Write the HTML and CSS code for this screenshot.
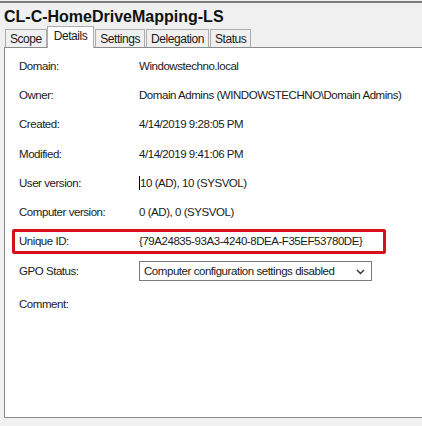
FILE: index.html
```html
<!DOCTYPE html>
<html lang="en">
<head>
    <meta charset="UTF-8">
    <title>CL-C-HomeDriveMapping-LS - Details</title>
    <link rel="stylesheet" href="styles.css">
</head>
<body>
    <div class="window">
        <h1 class="gpo-title">CL-C-HomeDriveMapping-LS</h1>

        <div class="tabs">
            <span class="tab">Scope</span>
            <span class="tab active">Details</span>
            <span class="tab">Settings</span>
            <span class="tab">Delegation</span>
            <span class="tab">Status</span>
        </div>

        <div class="panel">
            <div class="row">
                <span class="label">Domain:</span>
                <span class="value">Windowstechno.local</span>
            </div>
            <div class="row">
                <span class="label">Owner:</span>
                <span class="value">Domain Admins (WINDOWSTECHNO\Domain Admins)</span>
            </div>
            <div class="row">
                <span class="label">Created:</span>
                <span class="value">4/14/2019 9:28:05 PM</span>
            </div>
            <div class="row">
                <span class="label">Modified:</span>
                <span class="value">4/14/2019 9:41:06 PM</span>
            </div>
            <div class="row">
                <span class="label">User version:</span>
                <span class="value"><span class="caret"></span>10 (AD), 10 (SYSVOL)</span>
            </div>
            <div class="row">
                <span class="label">Computer version:</span>
                <span class="value">0 (AD), 0 (SYSVOL)</span>
            </div>
            <div class="row highlight">
                <span class="label">Unique ID:</span>
                <span class="value">{79A24835-93A3-4240-8DEA-F35EF53780DE}</span>
            </div>
            <div class="row status-row">
                <span class="label">GPO Status:</span>
                <div class="select">
                    <span>Computer configuration settings disabled</span>
                    <svg class="chevron" width="9" height="6" viewBox="0 0 9 6">
                        <path d="M1 1 L4.5 4.5 L8 1" fill="none" stroke="#333" stroke-width="1.4"/>
                    </svg>
                </div>
            </div>
            <div class="row comment-row">
                <span class="label">Comment:</span>
            </div>
        </div>
    </div>
</body>
</html>
```

FILE: styles.css
```css
* {
    box-sizing: border-box;
}

body {
    margin: 0;
    padding: 0;
    background-color: #f0f0f0;
    font-family: "Liberation Sans", Arial, sans-serif;
    font-size: 11.5px;
    letter-spacing: -0.45px;
    color: #1a1a1a;
}

.window {
    border-top: 2px solid #7d7d7d;
    margin-top: 1px;
    height: 417px;
    display: flex;
    flex-direction: column;
}

.gpo-title {
    font-size: 16px;
    font-weight: 700;
    letter-spacing: 0;
    color: #111;
    margin: 4px 0 0 4px;
    height: 20px;
    line-height: 20px;
}

.tabs {
    display: flex;
    align-items: flex-end;
    margin-left: 5px;
    height: 20px;
}

.tab {
    border: 1px solid #adadad;
    border-bottom: none;
    background-color: #f0f0f0;
    padding: 0 4px;
    height: 18px;
    line-height: 18px;
    margin-right: 1px;
    font-size: 12px;
    white-space: nowrap;
}

.tab.active {
    background-color: #fff;
    height: 22px;
    line-height: 18px;
    margin: 0 1px -1px -1px;
    padding: 0 6px;
    position: relative;
    z-index: 1;
}

.panel {
    flex: 1;
    background-color: #fff;
    border: 1px solid #8a8a8a;
    border-right: none;
    margin-left: 4px;
    padding: 3px 0 0 14px;
}

.row {
    display: flex;
    align-items: center;
    height: 29.3px;
    white-space: nowrap;
}

.label {
    width: 120px;
    flex-shrink: 0;
}

.caret {
    display: inline-block;
    width: 1px;
    height: 14px;
    background-color: #000;
    vertical-align: -3px;
}

.highlight {
    margin: 2px 0 2.3px -7px;
    padding-left: 4px;
    width: 374px;
    height: 25px;
    border: 3px solid #d9101c;
    border-radius: 2px;
}

.status-row {
    height: 30px;
}

.select {
    display: flex;
    justify-content: space-between;
    align-items: center;
    width: 233px;
    height: 20px;
    border: 1px solid #7a7a7a;
    padding: 0 6px 0 4px;
}

.chevron {
    margin-top: 1px;
}

.comment-row {
    height: 36px;
}
```
